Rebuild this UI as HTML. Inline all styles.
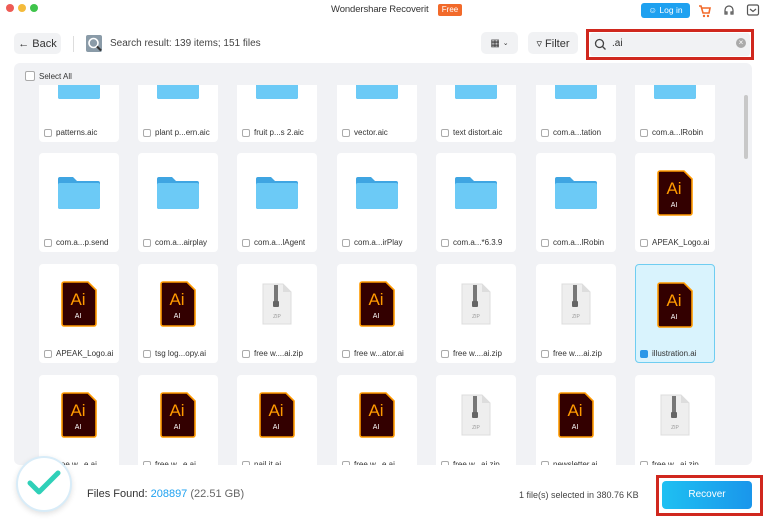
<!DOCTYPE html>
<html><head><meta charset="utf-8"><style>
*{margin:0;padding:0;box-sizing:border-box}
body{width:768px;height:523px;overflow:hidden;background:#fff;font-family:"Liberation Sans",sans-serif;position:relative;color:#333}
.abs{position:absolute}
.dot{position:absolute;top:4px;width:8px;height:8px;border-radius:50%}
.btn{position:absolute;background:#f1f2f4;border-radius:5px;font-size:11px;color:#333;display:flex;align-items:center;justify-content:center}
.panel{position:absolute;left:14px;top:63px;width:738px;height:402px;background:#f1f2f5;border-radius:6px}
.clip{position:absolute;left:14px;top:85px;width:738px;height:380px;overflow:hidden}
.card{position:absolute;width:80px;height:99px;background:#fff;border-radius:4px}
.card.sel{background:#d9f3fd;border:1px solid #6fcdf1}
.card svg{position:absolute;left:50%;top:40px;transform:translate(-50%,-50%)}
.lab{position:absolute;left:5px;top:85px;font-size:8px;color:#333;display:flex;align-items:center;white-space:nowrap}
.cb{width:8px;height:8px;border:1px solid #aaa;border-radius:2px;background:#fff;margin-right:4px;flex:none}
.cb.on{background:#2a97e8;border-color:#2a97e8}
</style></head><body>
<div class="dot" style="left:6px;background:#ee5b55"></div>
<div class="dot" style="left:18px;background:#f4bb3b"></div>
<div class="dot" style="left:30px;background:#3fc44b"></div>
<div class="abs" style="left:331px;top:4px;font-size:9.5px;color:#333;letter-spacing:-0.1px">Wondershare Recoverit</div>
<div class="abs" style="left:438px;top:4px;width:24px;height:12px;background:#f26a2a;color:#fff;font-size:8px;text-align:center;line-height:12px;border-radius:2px">Free</div>
<div class="abs" style="left:641px;top:3px;width:49px;height:15px;background:#1ea1f0;border-radius:3px;color:#fff;font-size:8.5px;line-height:15px;text-align:center">&#9786; Log in</div>
<svg class="abs" style="left:698px;top:4px" width="14" height="14" viewBox="0 0 14 14"><path d="M1 2h2l2 7h6l1-5H4" fill="none" stroke="#f26a2a" stroke-width="1.6"/><circle cx="6" cy="12" r="1.2" fill="#f26a2a"/><circle cx="10" cy="12" r="1.2" fill="#f26a2a"/></svg>
<svg class="abs" style="left:722px;top:4px" width="14" height="14" viewBox="0 0 14 14"><path d="M3 8V6a4 4 0 018 0v2M3 8v2h2V8zM11 8v2H9V8z" fill="none" stroke="#555" stroke-width="1.2"/></svg>
<svg class="abs" style="left:746px;top:3px" width="14" height="14" viewBox="0 0 14 14"><rect x="1.5" y="2" width="11" height="10" rx="1.5" fill="none" stroke="#555" stroke-width="1.2"/><path d="M4 6l3 2.5L10 6" fill="none" stroke="#555" stroke-width="1.2"/></svg>

<div class="btn" style="left:14px;top:33px;width:47px;height:21px">&#8592;&nbsp;Back</div>
<div class="abs" style="left:73px;top:36px;width:1px;height:16px;background:#ddd"></div>
<svg class="abs" style="left:86px;top:35px" width="17" height="18" viewBox="0 0 17 18"><rect width="16" height="17" rx="2" fill="#8a9ba8"/><circle cx="7.5" cy="8" r="4.5" fill="none" stroke="#fff" stroke-width="1.6"/><path d="M11 11.5l4 4" stroke="#333" stroke-width="2"/></svg>
<div class="abs" style="left:110px;top:38px;font-size:10px;color:#444">Search result: 139 items; 151 files</div>
<div class="btn" style="left:481px;top:32px;width:37px;height:22px;font-size:10px">&#9638; <span style="font-size:7px;margin-left:3px">&#8964;</span></div>
<div class="btn" style="left:528px;top:32px;width:50px;height:22px">&#9663;&nbsp;Filter</div>
<div class="abs" style="left:586px;top:29px;width:168px;height:31px;border:3px solid #d0281e"></div>
<div class="abs" style="left:590px;top:33px;width:160px;height:23px;background:#f1f2f4;border-radius:3px"></div>
<svg class="abs" style="left:594px;top:38px" width="12" height="13" viewBox="0 0 12 13"><circle cx="5.5" cy="5.5" r="4" fill="none" stroke="#444" stroke-width="1.3"/><path d="M8.5 8.5l3 3" stroke="#444" stroke-width="1.3"/></svg>
<div class="abs" style="left:612px;top:38px;font-size:10px;color:#333">.ai</div>
<div class="abs" style="left:736px;top:38px;width:10px;height:10px;border-radius:50%;background:#aaa;color:#fff;font-size:8px;line-height:10px;text-align:center">×</div>

<div class="panel"></div>
<div class="abs" style="left:25px;top:71px;width:10px;height:10px;border:1px solid #aaa;border-radius:2px;background:#fff"></div>
<div class="abs" style="left:39px;top:72px;font-size:8px;color:#333">Select All</div>
<div class="abs" style="left:744px;top:95px;width:4px;height:64px;background:#c8c8c8;border-radius:2px"></div>

<svg width="0" height="0" style="position:absolute"><defs>
<symbol id="fo" viewBox="0 0 46 36"><path d="M2 4a2 2 0 012-2h13l4 4h21a2 2 0 012 2v24a2 2 0 01-2 2H4a2 2 0 01-2-2z" fill="#3fa5e2"/><rect x="2" y="8" width="42" height="26" rx="2" fill="#6ccaf6"/></symbol>
<symbol id="ai" viewBox="0 0 36 46"><path d="M3 1h24l8 8v34a2 2 0 01-2 2H3a2 2 0 01-2-2V3a2 2 0 012-2z" fill="#330000" stroke="#ff9a00" stroke-width="1.6"/><text x="17" y="24" text-anchor="middle" font-family="Liberation Sans,sans-serif" font-size="17" fill="#ff9a00">Ai</text><text x="17" y="37" text-anchor="middle" font-family="Liberation Sans,sans-serif" font-size="7" fill="#fff">AI</text></symbol>
<symbol id="zp" viewBox="0 0 30 42"><path d="M1 1h20l8 8v32H1z" fill="#eee" stroke="#ddd"/><path d="M21 1v8h8" fill="#ddd"/><rect x="12" y="2" width="4" height="20" fill="#777"/><rect x="11" y="18" width="6" height="6" rx="1" fill="#666"/><text x="15" y="35" text-anchor="middle" font-family="Liberation Sans,sans-serif" font-size="5" fill="#999">ZIP</text></symbol>
</defs></svg>

<div class="clip">
<div class="card" style="left:25px;top:-42px"><svg width="46" height="36"><use href="#fo"/></svg><div class="lab"><span class="cb"></span>patterns.aic</div></div>
<div class="card" style="left:124px;top:-42px"><svg width="46" height="36"><use href="#fo"/></svg><div class="lab"><span class="cb"></span>plant p...ern.aic</div></div>
<div class="card" style="left:223px;top:-42px"><svg width="46" height="36"><use href="#fo"/></svg><div class="lab"><span class="cb"></span>fruit p...s 2.aic</div></div>
<div class="card" style="left:323px;top:-42px"><svg width="46" height="36"><use href="#fo"/></svg><div class="lab"><span class="cb"></span>vector.aic</div></div>
<div class="card" style="left:422px;top:-42px"><svg width="46" height="36"><use href="#fo"/></svg><div class="lab"><span class="cb"></span>text distort.aic</div></div>
<div class="card" style="left:522px;top:-42px"><svg width="46" height="36"><use href="#fo"/></svg><div class="lab"><span class="cb"></span>com.a...tation</div></div>
<div class="card" style="left:621px;top:-42px"><svg width="46" height="36"><use href="#fo"/></svg><div class="lab"><span class="cb"></span>com.a...lRobin</div></div>
<div class="card" style="left:25px;top:68px"><svg width="46" height="36"><use href="#fo"/></svg><div class="lab"><span class="cb"></span>com.a...p.send</div></div>
<div class="card" style="left:124px;top:68px"><svg width="46" height="36"><use href="#fo"/></svg><div class="lab"><span class="cb"></span>com.a...airplay</div></div>
<div class="card" style="left:223px;top:68px"><svg width="46" height="36"><use href="#fo"/></svg><div class="lab"><span class="cb"></span>com.a...lAgent</div></div>
<div class="card" style="left:323px;top:68px"><svg width="46" height="36"><use href="#fo"/></svg><div class="lab"><span class="cb"></span>com.a...irPlay</div></div>
<div class="card" style="left:422px;top:68px"><svg width="46" height="36"><use href="#fo"/></svg><div class="lab"><span class="cb"></span>com.a...*6.3.9</div></div>
<div class="card" style="left:522px;top:68px"><svg width="46" height="36"><use href="#fo"/></svg><div class="lab"><span class="cb"></span>com.a...lRobin</div></div>
<div class="card" style="left:621px;top:68px"><svg width="36" height="46"><use href="#ai"/></svg><div class="lab"><span class="cb"></span>APEAK_Logo.ai</div></div>
<div class="card" style="left:25px;top:179px"><svg width="36" height="46"><use href="#ai"/></svg><div class="lab"><span class="cb"></span>APEAK_Logo.ai</div></div>
<div class="card" style="left:124px;top:179px"><svg width="36" height="46"><use href="#ai"/></svg><div class="lab"><span class="cb"></span>tsg log...opy.ai</div></div>
<div class="card" style="left:223px;top:179px"><svg width="30" height="42"><use href="#zp"/></svg><div class="lab"><span class="cb"></span>free w....ai.zip</div></div>
<div class="card" style="left:323px;top:179px"><svg width="36" height="46"><use href="#ai"/></svg><div class="lab"><span class="cb"></span>free w...ator.ai</div></div>
<div class="card" style="left:422px;top:179px"><svg width="30" height="42"><use href="#zp"/></svg><div class="lab"><span class="cb"></span>free w....ai.zip</div></div>
<div class="card" style="left:522px;top:179px"><svg width="30" height="42"><use href="#zp"/></svg><div class="lab"><span class="cb"></span>free w....ai.zip</div></div>
<div class="card sel" style="left:621px;top:179px"><svg width="36" height="46"><use href="#ai"/></svg><div class="lab" style="left:4px;top:84px"><span class="cb on"></span>illustration.ai</div></div>
<div class="card" style="left:25px;top:290px"><svg width="36" height="46"><use href="#ai"/></svg><div class="lab"><span class="cb"></span>free w...e.ai</div></div>
<div class="card" style="left:124px;top:290px"><svg width="36" height="46"><use href="#ai"/></svg><div class="lab"><span class="cb"></span>free w...e.ai</div></div>
<div class="card" style="left:223px;top:290px"><svg width="36" height="46"><use href="#ai"/></svg><div class="lab"><span class="cb"></span>nail it.ai</div></div>
<div class="card" style="left:323px;top:290px"><svg width="36" height="46"><use href="#ai"/></svg><div class="lab"><span class="cb"></span>free w...e.ai</div></div>
<div class="card" style="left:422px;top:290px"><svg width="30" height="42"><use href="#zp"/></svg><div class="lab"><span class="cb"></span>free w...ai.zip</div></div>
<div class="card" style="left:522px;top:290px"><svg width="36" height="46"><use href="#ai"/></svg><div class="lab"><span class="cb"></span>newsletter.ai</div></div>
<div class="card" style="left:621px;top:290px"><svg width="30" height="42"><use href="#zp"/></svg><div class="lab"><span class="cb"></span>free w...ai.zip</div></div>
</div>

<div class="abs" style="left:0;top:465px;width:768px;height:58px;background:#fff"></div>
<div class="abs" style="left:16px;top:456px;width:56px;height:56px;border-radius:50%;background:#fff;border:2px solid #d8ecf8;box-shadow:0 2px 6px rgba(0,0,0,.12)"></div>
<svg class="abs" style="left:26px;top:468px" width="36" height="30" viewBox="0 0 36 30"><path d="M4 15l9 9L32 5" fill="none" stroke="#2fd0b8" stroke-width="5" stroke-linecap="round" stroke-linejoin="round"/></svg>
<div class="abs" style="left:87px;top:488px;font-size:11px;color:#333">Files Found: <span style="color:#1ea1f0">208897</span> <span style="color:#666">(22.51 GB)</span></div>
<div class="abs" style="left:519px;top:490px;font-size:9px;color:#444">1 file(s) selected in 380.76 KB</div>
<div class="abs" style="left:656px;top:475px;width:107px;height:41px;border:3px solid #d0281e"></div>
<div class="abs" style="left:662px;top:481px;width:90px;height:28px;border-radius:4px;background:linear-gradient(90deg,#1ec0f2,#1a96eb);color:#fff;font-size:10px;text-align:center;line-height:28px">Recover</div>
</body></html>
